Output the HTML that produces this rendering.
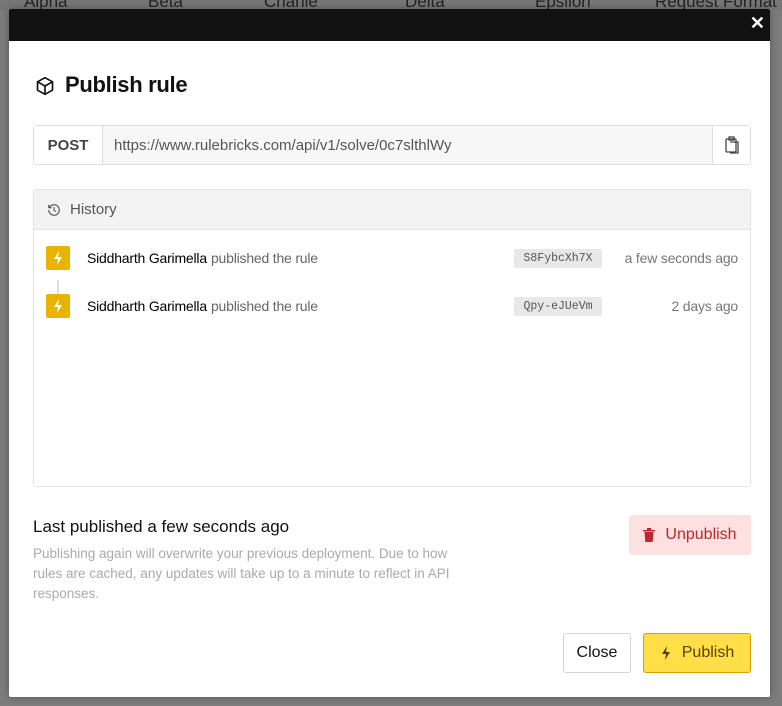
<!DOCTYPE html>
<html><head><style>
*{box-sizing:border-box;margin:0;padding:0}
body{width:782px;height:706px;overflow:hidden;background:#7c7c7c;font-family:"Liberation Sans",sans-serif;position:relative}
.bgtop{position:absolute;left:0;top:0;width:782px;height:10px;background:#777;color:#222;font-size:17px}
.bgtop span{position:absolute;top:-8px}
.modal{position:absolute;left:9px;top:9px;width:761px;height:688px;background:#fff;border-radius:2px;overflow:hidden;box-shadow:0 0 8px rgba(0,0,0,.3)}
.hdr{height:32px;background:#111;position:relative}
.x{position:absolute;right:5px;top:4px;color:#fff;font-size:18px;font-weight:bold}
.abs{position:absolute}
h1{position:absolute;left:56px;top:63px;font-size:22px;font-weight:bold;color:#111;letter-spacing:-0.3px}
.url{position:absolute;left:24px;top:116px;width:718px;height:40px;border:1px solid #ddd;border-radius:3px;display:flex;background:#f7f7f7}
.url .m{width:69px;background:#fff;border-right:1px solid #ddd;font-size:15px;font-weight:bold;color:#444;display:flex;align-items:center;justify-content:center}
.url .u{flex:1;font-size:15px;color:#555;display:flex;align-items:center;padding-left:11px}
.url .c{width:38px;border-left:1px solid #ddd;background:#fff;display:flex;align-items:center;justify-content:center}
.hist{position:absolute;left:24px;top:180px;width:718px;height:298px;border:1px solid #e3e3e3;border-radius:3px}
.hh{height:40px;background:#f3f3f3;border-bottom:1px solid #e3e3e3;display:flex;align-items:center;padding-left:13px;font-size:15px;color:#555}
.row{position:absolute;left:12px;width:692px;height:24px;font-size:14px}
.bolt{position:absolute;left:0;top:0;width:24px;height:24px;background:#e8b400;border-radius:2px;display:flex;align-items:center;justify-content:center}
.name{position:absolute;left:41px;top:4px;color:#000;letter-spacing:-0.2px}
.name i{font-style:normal;color:#666;margin-left:4px}
.code{position:absolute;left:468px;top:3px;height:19px;width:88px;background:#e8e8e8;border-radius:2px;font-family:"Liberation Mono",monospace;font-size:11.5px;color:#555;text-align:center;line-height:19px}
.time{position:absolute;right:0;top:4px;color:#777;letter-spacing:-0.2px}
.last{position:absolute;left:24px;top:508px;font-size:17px;color:#111}
.desc{position:absolute;left:24px;top:535px;width:432px;font-size:13.5px;line-height:20px;color:#aaa}
.unp{position:absolute;left:620px;top:506px;width:122px;height:40px;background:#fde1e1;border-radius:3px;color:#c0262d;font-size:16px;display:flex;align-items:center;justify-content:center;gap:10px}
.close{position:absolute;left:554px;top:624px;width:68px;height:40px;border:1px solid #d5d5d5;border-radius:3px;font-size:16px;display:flex;align-items:center;justify-content:center;color:#111}
.pub{position:absolute;left:634px;top:624px;width:108px;height:40px;background:#ffdf48;border:1px solid #d9a000;border-radius:3px;font-size:16px;display:flex;align-items:center;justify-content:center;gap:10px;color:#5a3d00}
</style></head><body>
<div class="bgtop"><span style="left:24px">Alpha</span><span style="left:148px">Beta</span><span style="left:264px">Charlie</span><span style="left:405px">Delta</span><span style="left:535px">Epsilon</span><span style="left:655px">Request Format</span></div>
<div class="modal">
<div class="hdr"><span class="x">✕</span></div>
<svg class="abs" style="left:26px;top:67px" width="20" height="20" viewBox="0 0 24 24" fill="none" stroke="#111" stroke-width="2" stroke-linejoin="round"><path d="M12 2l9 5v10l-9 5-9-5V7z"/><path d="M3 7l9 5 9-5M12 12v10"/></svg>
<h1>Publish rule</h1>
<div class="url"><div class="m">POST</div><div class="u">https://www.rulebricks.com/api/v1/solve/0c7slthlWy</div><div class="c"><svg width="16" height="18" viewBox="0 0 16 18" fill="none" stroke="#444" stroke-width="1.3"><rect x="2" y="3" width="10" height="13" rx="1"/><rect x="5" y="1" width="5" height="3"/><path d="M6 6h8v11H6"/></svg></div></div>
<div class="hist">
<div class="hh"><svg width="14" height="14" viewBox="0 0 24 24" fill="none" stroke="#555" stroke-width="2"><path d="M3 12a9 9 0 1 0 3-6.7L3 8"/><path d="M3 3v5h5M12 7v5l3 3"/></svg><span style="margin-left:9px">History</span></div>
<div class="abs" style="left:23px;top:90px;width:2px;height:30px;background:#ddd"></div>
<div class="row" style="top:56px"><div class="bolt"><svg width="12" height="16" viewBox="0 0 12 16"><path d="M7 1L2 9h4l-1 6 5-8H6z" fill="#fff"/></svg></div><div class="name">Siddharth Garimella<i>published the rule</i></div><div class="code">S8FybcXh7X</div><div class="time">a few seconds ago</div></div>
<div class="row" style="top:104px"><div class="bolt"><svg width="12" height="16" viewBox="0 0 12 16"><path d="M7 1L2 9h4l-1 6 5-8H6z" fill="#fff"/></svg></div><div class="name">Siddharth Garimella<i>published the rule</i></div><div class="code">Qpy-eJUeVm</div><div class="time">2 days ago</div></div>
</div>
<div class="last">Last published a few seconds ago</div>
<div class="desc">Publishing again will overwrite your previous deployment. Due to how rules are cached, any updates will take up to a minute to reflect in API responses.</div>
<div class="unp"><svg width="12" height="14" viewBox="0 0 12 14"><path d="M0 2h12v1.5H0zM4 0h4v2H4zM1.5 4h9l-.8 10H2.3z" fill="#c0262d"/></svg>Unpublish</div>
<div class="close">Close</div>
<div class="pub"><svg width="12" height="16" viewBox="0 0 12 16"><path d="M7 1L2 9h4l-1 6 5-8H6z" fill="#5a3d00"/></svg>Publish</div>
</div>
</body></html>
